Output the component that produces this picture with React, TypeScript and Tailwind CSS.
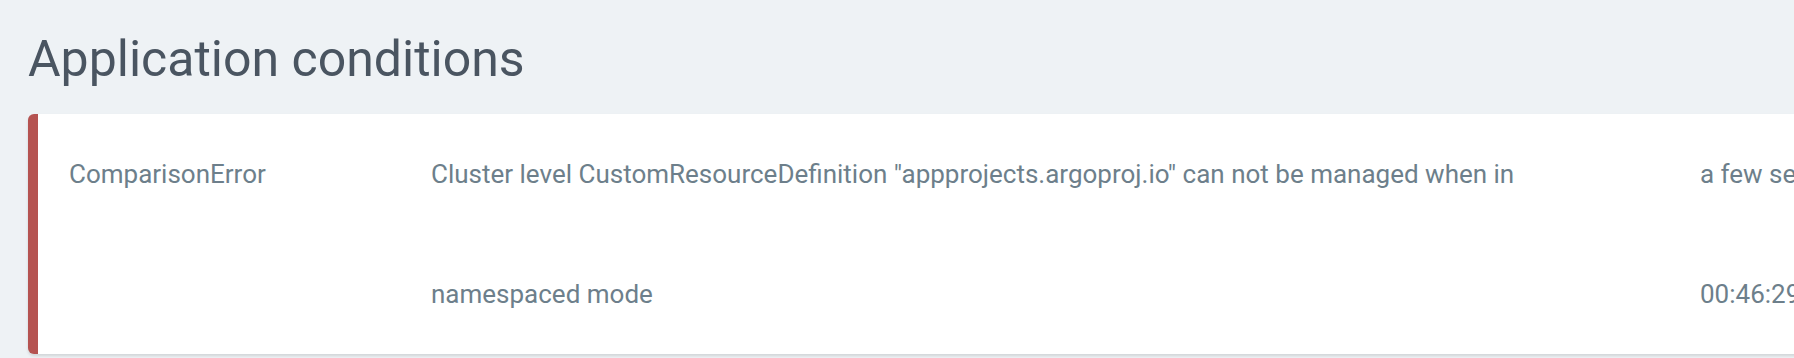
import React from 'react';

interface Condition {
    type: string;
    message: string[];
    time: string[];
}

const conditions: Condition[] = [
    {
        type: 'ComparisonError',
        message: [
            'Cluster level CustomResourceDefinition "appprojects.argoproj.io" can not be managed when in',
            'namespaced mode',
        ],
        time: ['a few seconds ago', '00:46:29'],
    },
];

export default function App() {
    return (
        <div className="w-full h-[358px] overflow-hidden bg-[#eef2f5] pl-[28px]" style={{ fontFamily: 'Roboto, "Liberation Sans", sans-serif' }}>
            <h1 className="pt-[31px] mb-[26px] text-[50px] leading-[57px] font-normal text-[#4a5561] whitespace-nowrap">
                Application conditions
            </h1>
            {conditions.map((c) => (
                <div
                    key={c.type}
                    className="w-[1900px] flex bg-white rounded-md border-l-[10px] border-[#b55351] shadow-[0_2px_3px_rgba(0,0,0,0.12)] text-[26px] leading-[120px] text-[#6d7f8b] whitespace-nowrap"
                >
                    <div className="w-[393px] pl-[31px]">{c.type}</div>
                    <div className="w-[1269px]">
                        {c.message.map((line) => (
                            <div key={line}>{line}</div>
                        ))}
                    </div>
                    <div className="flex-1">
                        {c.time.map((line) => (
                            <div key={line}>{line}</div>
                        ))}
                    </div>
                </div>
            ))}
        </div>
    );
}
